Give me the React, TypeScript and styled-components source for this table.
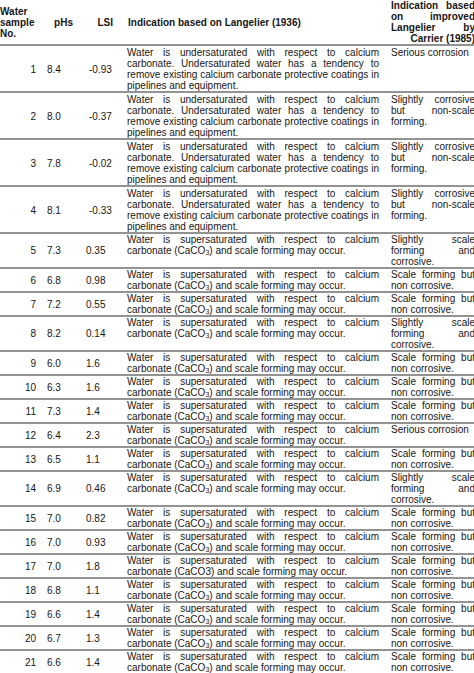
import styled, { createGlobalStyle } from "styled-components";

const GlobalStyle = createGlobalStyle`
  html, body {
    margin: 0;
    padding: 0;
    background: #fff;
    overflow: hidden;
  }
  body {
    font-family: "Liberation Sans", Arial, sans-serif;
    color: #161616;
  }
`;

const columns = "40px 40px 40px 264px 91px";

const Table = styled.div`
  width: 475px;
  font-size: 10px;
  line-height: 11px;
`;

const HeaderRow = styled.div`
  display: grid;
  grid-template-columns: ${columns};
  height: 44px;
  font-weight: bold;
`;

const HeadCell = styled.div<{ $align?: "left" | "right"; $padRight?: number }>`
  display: flex;
  flex-direction: column;
  justify-content: center;
  text-align: ${({ $align }) => $align ?? "left"};
  padding-right: ${({ $padRight }) => $padRight ?? 0}px;
`;

const HeadText = styled.div<{ $pad?: number }>`
  display: flex;
  align-items: center;
  padding-left: ${({ $pad }) => $pad ?? 0}px;
`;

const HeadResult = styled.div`
  padding: 0 0 0 7px;
  text-align: justify;
  text-align-last: right;
`;

const Row = styled.div<{ $tall?: boolean }>`
  display: grid;
  grid-template-columns: ${columns};
  border-top: 2px solid #939393;
  padding-top: ${({ $tall }) => ($tall ? 1 : 0)}px;
`;

const NumCell = styled.div`
  display: flex;
  align-items: center;
  justify-content: flex-end;
  padding-right: 4px;
`;

const ValueCell = styled.div<{ $pad: number }>`
  display: flex;
  align-items: center;
  padding-left: ${({ $pad }) => $pad}px;
`;

const TextCell = styled.div`
  padding: 0 5px 0 7px;
  text-align: justify;
`;

const ResultCell = styled.div`
  padding-left: 7px;
  text-align: justify;
`;

const Sub = styled.sub`
  font-size: 7px;
  line-height: 0;
  vertical-align: -1px;
`;

const UNDER =
  "Water is undersaturated with respect to calcium carbonate. Undersaturated water has a tendency to remove existing calcium carbonate protective coatings in pipelines and equipment.";

const SERIOUS = "Serious corrosion";
const SLIGHT_CORR = "Slightly corrosive but non-scale forming.";
const SLIGHT_SCALE = "Slightly scale forming and corrosive.";
const SCALE = "Scale forming but non corrosive.";

type Sample = {
  no: number;
  phs: string;
  lsi: string;
  kind: "under" | "super" | "superPlain";
  result: string;
};

const samples: Sample[] = [
  { no: 1, phs: "8.4", lsi: "-0.93", kind: "under", result: SERIOUS },
  { no: 2, phs: "8.0", lsi: "-0.37", kind: "under", result: SLIGHT_CORR },
  { no: 3, phs: "7.8", lsi: "-0.02", kind: "under", result: SLIGHT_CORR },
  { no: 4, phs: "8.1", lsi: "-0.33", kind: "under", result: SLIGHT_CORR },
  { no: 5, phs: "7.3", lsi: "0.35", kind: "super", result: SLIGHT_SCALE },
  { no: 6, phs: "6.8", lsi: "0.98", kind: "super", result: SCALE },
  { no: 7, phs: "7.2", lsi: "0.55", kind: "super", result: SCALE },
  { no: 8, phs: "8.2", lsi: "0.14", kind: "super", result: SLIGHT_SCALE },
  { no: 9, phs: "6.0", lsi: "1.6", kind: "super", result: SCALE },
  { no: 10, phs: "6.3", lsi: "1.6", kind: "super", result: SCALE },
  { no: 11, phs: "7.3", lsi: "1.4", kind: "super", result: SCALE },
  { no: 12, phs: "6.4", lsi: "2.3", kind: "super", result: SERIOUS },
  { no: 13, phs: "6.5", lsi: "1.1", kind: "super", result: SCALE },
  { no: 14, phs: "6.9", lsi: "0.46", kind: "super", result: SLIGHT_SCALE },
  { no: 15, phs: "7.0", lsi: "0.82", kind: "super", result: SCALE },
  { no: 16, phs: "7.0", lsi: "0.93", kind: "super", result: SCALE },
  { no: 17, phs: "7.0", lsi: "1.8", kind: "superPlain", result: SCALE },
  { no: 18, phs: "6.8", lsi: "1.1", kind: "super", result: SCALE },
  { no: 19, phs: "6.6", lsi: "1.4", kind: "super", result: SCALE },
  { no: 20, phs: "6.7", lsi: "1.3", kind: "super", result: SCALE },
  { no: 21, phs: "6.6", lsi: "1.4", kind: "super", result: SCALE },
];

const Indication = ({ kind }: { kind: Sample["kind"] }) => {
  if (kind === "under") return <>{UNDER}</>;
  return (
    <>
      Water is supersaturated with respect to calcium carbonate (CaCO
      {kind === "super" ? <Sub>3</Sub> : "3"}) and scale forming may occur.
    </>
  );
};

const App = () => {
  return (
    <>
      <GlobalStyle />
      <Table>
        <HeaderRow>
          <HeadCell>
            Water
            <br />
            sample
            <br />
            No.
          </HeadCell>
          <HeadCell $align="right" $padRight={7}>
            pHs
          </HeadCell>
          <HeadCell $align="right" $padRight={7}>
            LSI
          </HeadCell>
          <HeadText $pad={8}>Indication based on Langelier (1936)</HeadText>
          <HeadResult>
            Indication based on improved Langelier by Carrier (1985)
          </HeadResult>
        </HeaderRow>
        {samples.map((s) => (
          <Row key={s.no} $tall={s.kind === "under"}>
            <NumCell>{s.no}</NumCell>
            <ValueCell $pad={7}>{s.phs}</ValueCell>
            <ValueCell $pad={s.lsi.startsWith("-") ? 9 : 6}>{s.lsi}</ValueCell>
            <TextCell>
              <Indication kind={s.kind} />
            </TextCell>
            <ResultCell>{s.result}</ResultCell>
          </Row>
        ))}
      </Table>
    </>
  );
};

export default App;
